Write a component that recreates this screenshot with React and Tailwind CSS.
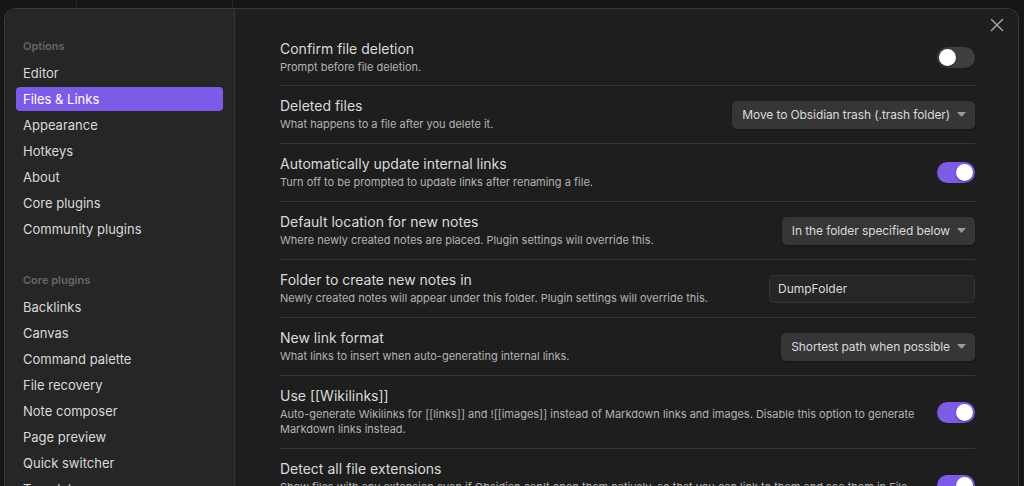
import React from 'react';
import { X } from 'lucide-react';

const OPTIONS = ['Editor', 'Files & Links', 'Appearance', 'Hotkeys', 'About', 'Core plugins', 'Community plugins'];
const CORE = ['Backlinks', 'Canvas', 'Command palette', 'File recovery', 'Note composer', 'Page preview', 'Quick switcher', 'Templates'];

const SETTINGS = [
  { title: 'Confirm file deletion', desc: 'Prompt before file deletion.', control: { type: 'toggle', on: false } },
  { title: 'Deleted files', desc: 'What happens to a file after you delete it.', control: { type: 'select', value: 'Move to Obsidian trash (.trash folder)' } },
  { title: 'Automatically update internal links', desc: 'Turn off to be prompted to update links after renaming a file.', control: { type: 'toggle', on: true } },
  { title: 'Default location for new notes', desc: 'Where newly created notes are placed. Plugin settings will override this.', control: { type: 'select', value: 'In the folder specified below' } },
  { title: 'Folder to create new notes in', desc: 'Newly created notes will appear under this folder. Plugin settings will override this.', control: { type: 'input', value: 'DumpFolder' } },
  { title: 'New link format', desc: 'What links to insert when auto-generating internal links.', control: { type: 'select', value: 'Shortest path when possible' } },
  { title: 'Use [[Wikilinks]]', desc: 'Auto-generate Wikilinks for [[links]] and ![[images]] instead of Markdown links and images. Disable this option to generate Markdown links instead.', control: { type: 'toggle', on: true } },
  { title: 'Detect all file extensions', desc: "Show files with any extension even if Obsidian can't open them natively, so that you can link to them and see them in File explorer and Quick switcher.", control: { type: 'toggle', on: true } },
];

function Toggle({ on }) {
  return (
    <div className={`w-[38px] h-[21px] rounded-full p-[2px] flex ${on ? 'bg-[#7c5ce6] justify-end' : 'bg-[#3f3f3f] justify-start'}`}>
      <div className="w-[17px] h-[17px] rounded-full bg-white shadow-[0_1px_2px_rgba(0,0,0,0.4)]" />
    </div>
  );
}

function Select({ value }) {
  return (
    <div className="h-[28px] rounded-[5px] bg-[#363636] shadow-[0_1px_2px_rgba(0,0,0,0.35)] flex items-center pl-[10px] pr-[9px] gap-[7px] text-[12px] tracking-[-0.1px] text-[#dadada]">
      <span>{value}</span>
      <svg width="9" height="5" viewBox="0 0 9 5"><path d="M0 0 L9 0 L4.5 5 Z" fill="#9a9a9a" /></svg>
    </div>
  );
}

function Control({ control }) {
  if (control.type === 'toggle') return <Toggle on={control.on} />;
  if (control.type === 'select') return <Select value={control.value} />;
  return (
    <div className="w-[206px] h-[28px] rounded-[5px] bg-[#262626] border border-[#363636] flex items-center px-[8px] text-[12px] text-[#dadada]">
      {control.value}
    </div>
  );
}

export default function App() {
  return (
    <div className="w-[1024px] h-[486px] bg-[#161616] overflow-hidden flex flex-col" style={{ fontFamily: 'Inter, "Noto Sans", sans-serif' }}>
      {/* workspace behind the modal */}
      <div className="h-[8px] flex shrink-0">
        <div className="w-[77px] border-r border-[#262626]" />
        <div className="w-[156px] border-r border-[#262626]" />
      </div>

      <div className="flex-1 mx-[4px] mr-[5px] rounded-t-[12px] border border-b-0 border-[#3a3a3a] overflow-hidden flex relative">
        <div className="w-[230px] shrink-0 bg-[#262626] border-r border-[#363636] px-[11px] pt-[29px]">
          <div className="h-[16px] leading-[16px] pl-[7px] text-[11px] font-semibold text-[#666666]">Options</div>
          <div className="mt-[7px] flex flex-col gap-[2px]">
            {OPTIONS.map((item) => (
              <div
                key={item}
                className={`h-[24px] leading-[24px] pl-[7px] rounded-[4px] text-[13px] ${item === 'Files & Links' ? 'bg-[#7c5ce6] text-white' : 'text-[#dadada]'}`}
              >
                {item}
              </div>
            ))}
          </div>
          <div className="mt-[31px] h-[16px] leading-[16px] pl-[7px] text-[11px] font-semibold text-[#666666]">Core plugins</div>
          <div className="mt-[7px] flex flex-col gap-[2px]">
            {CORE.map((item) => (
              <div key={item} className="h-[24px] leading-[24px] pl-[7px] text-[13px] text-[#dadada]">{item}</div>
            ))}
          </div>
        </div>

        <div className="flex-1 bg-[#1e1e1e] pl-[45px] pr-[43px] pt-[20px]">
          {SETTINGS.map((s, i) => (
            <div key={s.title} className={`flex items-center pt-[11px] ${i > 0 ? 'border-t border-[#363636] pb-[11px]' : 'pb-[10px]'}`}>
              <div className="flex-1 pr-[18px]">
                <div className="text-[14px] leading-[18px] text-[#dadada]">{s.title}</div>
                <div className="pt-[2px] text-[11px] leading-[15px] text-[#b3b3b3]">{s.desc}</div>
              </div>
              <div className="shrink-0 flex justify-end">
                <Control control={s.control} />
              </div>
            </div>
          ))}
        </div>

        <button className="absolute right-[10px] top-[5px] text-[#a0a0a0]">
          <X size={22} strokeWidth={1.6} />
        </button>
      </div>
    </div>
  );
}
